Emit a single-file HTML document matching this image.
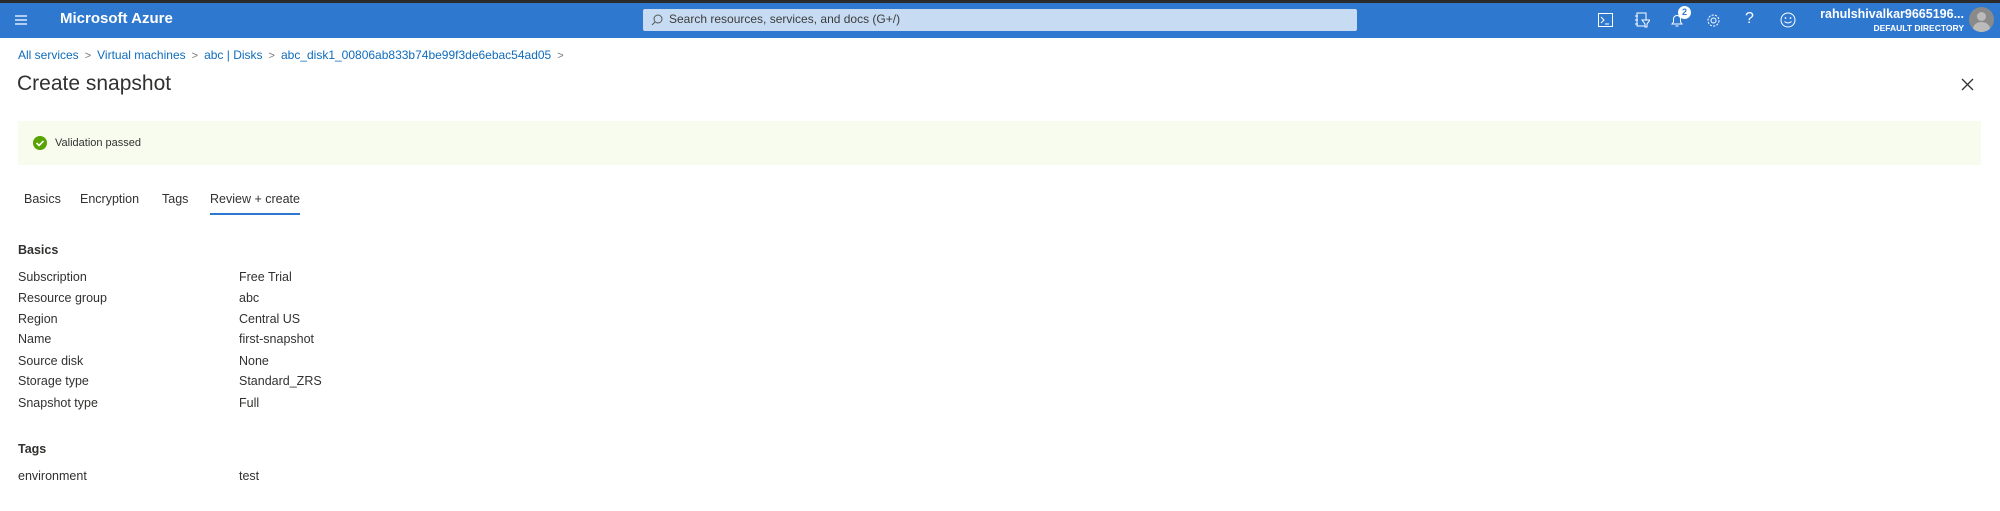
<!DOCTYPE html>
<html><head><meta charset="utf-8"><style>
*{margin:0;padding:0;box-sizing:border-box}
body{width:2000px;height:511px;background:#fff;font-family:"Liberation Sans",sans-serif;position:relative;overflow:hidden;color:#323130}
.abs{position:absolute;white-space:nowrap}
#top{position:absolute;left:0;top:0;width:2000px;height:3px;background:#2b2b2b}
#hdr{position:absolute;left:0;top:3px;width:2000px;height:35px;background:#2f78d0}
.lbl{font-size:12.5px;color:#323130}
.ic{position:absolute;top:10px}
.sep{color:#777;margin:0 6px 0 6px;font-size:11px}
</style></head><body>
<div id="top"></div>
<div id="hdr">
 <svg class="ic" style="left:14px;top:11px" width="14" height="12"><path d="M1 2h12M1 6h12M1 10h12" stroke="#fff" stroke-width="1.3"/></svg>
 <div class="abs" style="left:60px;top:7px;color:#fff;font-size:15px;font-weight:bold">Microsoft Azure</div>
 <div class="abs" style="left:643px;top:6px;width:714px;height:22px;background:#c7dcf3;border-radius:2px"></div>
 <svg class="abs" style="left:651px;top:11px" width="12" height="12"><circle cx="7" cy="5" r="4" fill="none" stroke="#555" stroke-width="1"/><path d="M4 8L1 11" stroke="#555"/></svg>
 <div class="abs" style="left:669px;top:9px;font-size:12px;color:#3b3b3b">Search resources, services, and docs (G+/)</div>
 <svg class="ic" style="left:1598px;top:10px" width="15" height="14"><rect x=".5" y=".5" width="14" height="13" fill="none" stroke="#fff"/><path d="M3 4l3 3-3 3M7 11h4" stroke="#fff" fill="none"/></svg>
 <svg class="ic" style="left:1635px;top:9px" width="15" height="16"><rect x="2" y="1" width="9" height="13" fill="none" stroke="#fff"/><path d="M0 4h3M0 8h3M0 12h3M7 8h8l-3 4v3h-2v-3z" stroke="#fff" fill="#2f78d0"/></svg>
 <svg class="ic" style="left:1670px;top:9px" width="14" height="16"><path d="M2 12h10l-1.5-2V7a3.5 3.5 0 0 0-7 0v3z M5.5 14h3" stroke="#fff" fill="none"/></svg>
 <div class="abs" style="left:1678px;top:3px;width:13px;height:13px;border-radius:50%;background:#fff;color:#2f78d0;font-size:9px;font-weight:bold;text-align:center;line-height:13px">2</div>
 <svg class="ic" style="left:1706px;top:10px" width="15" height="15"><circle cx="7.5" cy="7.5" r="2.5" fill="none" stroke="#fff"/><circle cx="7.5" cy="7.5" r="5.5" fill="none" stroke="#fff" stroke-dasharray="2.2 1.2"/></svg>
 <div class="abs" style="left:1745px;top:7px;color:#fff;font-size:16px">?</div>
 <svg class="ic" style="left:1780px;top:9px" width="16" height="16"><circle cx="8" cy="8" r="7" fill="none" stroke="#fff"/><circle cx="5.5" cy="6" r=".9" fill="#fff"/><circle cx="10.5" cy="6" r=".9" fill="#fff"/><path d="M4.5 9.5q3.5 3 7 0" stroke="#fff" fill="none"/></svg>
 <div class="abs" style="right:36px;top:4px;color:#fff;font-size:12.5px;font-weight:bold">rahulshivalkar9665196...</div>
 <div class="abs" style="right:36px;top:20px;color:#fff;font-size:8.5px;font-weight:bold">DEFAULT DIRECTORY</div>
 <div class="abs" style="left:1969px;top:4px;width:25px;height:25px;border-radius:50%;background:#8a8a8a;overflow:hidden"><div style="position:absolute;left:8px;top:5px;width:9px;height:9px;border-radius:50%;background:#bbb"></div><div style="position:absolute;left:4px;top:15px;width:17px;height:14px;border-radius:50%;background:#bbb"></div></div>
</div>
<div class="abs" style="left:18px;top:48px;font-size:12px;color:#0f6cbd">All services<span class="sep">&gt;</span>Virtual machines<span class="sep">&gt;</span>abc | Disks<span class="sep">&gt;</span>abc_disk1_00806ab833b74be99f3de6ebac54ad05<span class="sep">&gt;</span></div>
<div class="abs" style="left:17px;top:72px;font-size:21px;color:#323130">Create snapshot</div>
<svg class="abs" style="left:1961px;top:78px" width="13" height="13"><path d="M1 1l11 11M12 1L1 12" stroke="#333" stroke-width="1.3"/></svg>
<div class="abs" style="left:18px;top:121px;width:1963px;height:44px;background:#f8fcef"></div>
<svg class="abs" style="left:33px;top:136px" width="14" height="14"><circle cx="7" cy="7" r="7" fill="#57a300"/><path d="M3.5 7l2.5 2.5 4.5-4.5" stroke="#fff" stroke-width="1.6" fill="none"/></svg>
<div class="abs" style="left:55px;top:137px;font-size:11px">Validation passed</div>
<div class="abs" style="left:24px;top:192px;font-size:12.5px">Basics</div>
<div class="abs" style="left:80px;top:192px;font-size:12.5px">Encryption</div>
<div class="abs" style="left:162px;top:192px;font-size:12.5px">Tags</div>
<div class="abs" style="left:210px;top:192px;font-size:12.5px">Review + create</div>
<div class="abs" style="left:210px;top:213px;width:90px;height:2px;background:#2f78d0"></div>
<div class="abs" style="left:18px;top:243px;font-size:12.5px;font-weight:bold">Basics</div>
<div class="abs lbl" style="left:18px;top:270px">Subscription</div><div class="abs lbl" style="left:239px;top:270px">Free Trial</div>
<div class="abs lbl" style="left:18px;top:291px">Resource group</div><div class="abs lbl" style="left:239px;top:291px">abc</div>
<div class="abs lbl" style="left:18px;top:312px">Region</div><div class="abs lbl" style="left:239px;top:312px">Central US</div>
<div class="abs lbl" style="left:18px;top:332px">Name</div><div class="abs lbl" style="left:239px;top:332px">first-snapshot</div>
<div class="abs lbl" style="left:18px;top:354px">Source disk</div><div class="abs lbl" style="left:239px;top:354px">None</div>
<div class="abs lbl" style="left:18px;top:374px">Storage type</div><div class="abs lbl" style="left:239px;top:374px">Standard_ZRS</div>
<div class="abs lbl" style="left:18px;top:396px">Snapshot type</div><div class="abs lbl" style="left:239px;top:396px">Full</div>
<div class="abs" style="left:18px;top:442px;font-size:12.5px;font-weight:bold">Tags</div>
<div class="abs lbl" style="left:18px;top:469px">environment</div><div class="abs lbl" style="left:239px;top:469px">test</div>
</body></html>
